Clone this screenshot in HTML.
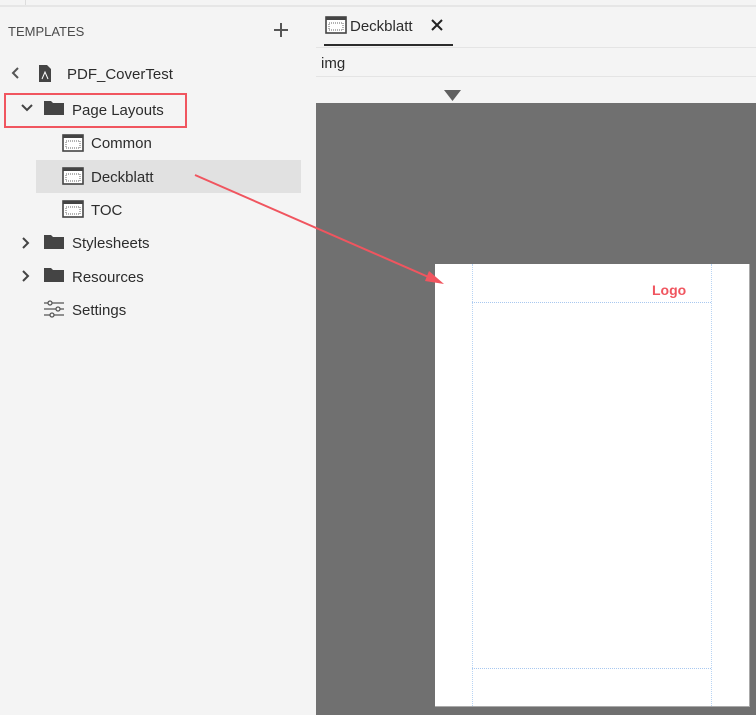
<!DOCTYPE html>
<html><head><style>
*{margin:0;padding:0;box-sizing:border-box}
body{width:756px;height:715px;background:#f4f4f4;font-family:"Liberation Sans",sans-serif;color:#2c2c2c;position:relative;overflow:hidden}
.a{position:absolute}
.t{position:absolute;font-size:15px;white-space:nowrap}
</style></head><body>
<div class="a" style="left:0;top:5px;width:756px;height:2px;background:#e6e6e6"></div>
<div class="a" style="left:25px;top:0;width:1px;height:5px;background:#ddd"></div>
<div class="t" style="left:8px;top:24px;font-size:13px;color:#4b4b4b">TEMPLATES</div>
<svg class="a" style="left:273px;top:22px" width="16" height="16"><path d="M8 1V15M1 8H15" stroke="#555" stroke-width="2"/></svg>
<svg class="a" style="left:10px;top:66px" width="12" height="14"><path d="M8 2L3 7L8 12" stroke="#555" stroke-width="2" fill="none"/></svg>
<svg class="a" style="left:38px;top:64px" width="14" height="19"><path d="M1 1H9L13 5V18H1Z" fill="#444"/><path d="M4 15L7 8L10 15" stroke="#fff" stroke-width="1" fill="none"/></svg>
<div class="t" style="left:67px;top:66px">PDF_CoverTest</div>
<div class="a" style="left:4px;top:93px;width:183px;height:35px;border:2px solid #f0555f"></div>
<svg class="a" style="left:20px;top:103px" width="14" height="10"><path d="M2 2L7 7L12 2" stroke="#444" stroke-width="2" fill="none"/></svg>
<svg class="a" style="left:43px;top:100px" width="22" height="16"><path d="M1 1H8L10 3H21V15H1Z" fill="#444"/></svg>
<div class="t" style="left:72px;top:102px">Page Layouts</div>
<div class="a" style="left:36px;top:160px;width:265px;height:33px;background:#e1e1e1"></div>
<svg class="a" style="left:62px;top:134px" width="22" height="18"><rect x="1" y="1" width="20" height="16" fill="#fff" stroke="#444" stroke-width="1.6"/><rect x="1" y="1" width="20" height="3" fill="#444"/><rect x="4" y="7" width="14" height="7" fill="none" stroke="#666" stroke-dasharray="1 1"/></svg>
<div class="t" style="left:91px;top:135px">Common</div>
<svg class="a" style="left:62px;top:167px" width="22" height="18"><rect x="1" y="1" width="20" height="16" fill="#fff" stroke="#444" stroke-width="1.6"/><rect x="1" y="1" width="20" height="3" fill="#444"/><rect x="4" y="7" width="14" height="7" fill="none" stroke="#666" stroke-dasharray="1 1"/></svg>
<div class="t" style="left:91px;top:169px">Deckblatt</div>
<svg class="a" style="left:62px;top:200px" width="22" height="18"><rect x="1" y="1" width="20" height="16" fill="#fff" stroke="#444" stroke-width="1.6"/><rect x="1" y="1" width="20" height="3" fill="#444"/><rect x="4" y="7" width="14" height="7" fill="none" stroke="#666" stroke-dasharray="1 1"/></svg>
<div class="t" style="left:91px;top:202px">TOC</div>
<svg class="a" style="left:21px;top:236px" width="10" height="14"><path d="M2 2L7 7L2 12" stroke="#444" stroke-width="2" fill="none"/></svg>
<svg class="a" style="left:43px;top:234px" width="22" height="16"><path d="M1 1H8L10 3H21V15H1Z" fill="#444"/></svg>
<div class="t" style="left:72px;top:235px">Stylesheets</div>
<svg class="a" style="left:21px;top:269px" width="10" height="14"><path d="M2 2L7 7L2 12" stroke="#444" stroke-width="2" fill="none"/></svg>
<svg class="a" style="left:43px;top:267px" width="22" height="16"><path d="M1 1H8L10 3H21V15H1Z" fill="#444"/></svg>
<div class="t" style="left:72px;top:269px">Resources</div>
<svg class="a" style="left:43px;top:300px" width="22" height="18" stroke="#555" stroke-width="1.3" fill="#f4f4f4"><path d="M1 3H21M1 9H21M1 15H21"/><circle cx="7" cy="3" r="2"/><circle cx="15" cy="9" r="2"/><circle cx="9" cy="15" r="2"/></svg>
<div class="t" style="left:72px;top:302px">Settings</div>

<svg class="a" style="left:325px;top:16px" width="22" height="18"><rect x="1" y="1" width="20" height="16" fill="#fff" stroke="#444" stroke-width="1.6"/><rect x="1" y="1" width="20" height="3" fill="#444"/><rect x="4" y="7" width="14" height="7" fill="none" stroke="#666" stroke-dasharray="1 1"/></svg>
<div class="t" style="left:350px;top:18px">Deckblatt</div>
<svg class="a" style="left:431px;top:19px" width="12" height="12"><path d="M1 1L11 11M11 1L1 11" stroke="#222" stroke-width="2"/></svg>
<div class="a" style="left:324px;top:44px;width:129px;height:2px;background:#2c2c2c"></div>
<div class="a" style="left:316px;top:47px;width:440px;height:1px;background:#e4e4e4"></div>
<div class="t" style="left:321px;top:55px">img</div>
<div class="a" style="left:316px;top:76px;width:440px;height:1px;background:#e4e4e4"></div>
<svg class="a" style="left:444px;top:90px" width="18" height="12"><path d="M0 0H17L8.5 11Z" fill="#606060"/></svg>
<div class="a" style="left:316px;top:103px;width:440px;height:612px;background:#707070"></div>
<div class="a" style="left:435px;top:264px;width:315px;height:443px;background:#fff;border-right:1px solid #aaa;border-bottom:1px solid #aaa"></div>
<div class="a" style="left:472px;top:264px;width:0;height:442px;border-left:1px dotted #b8d4f4"></div>
<div class="a" style="left:711px;top:264px;width:0;height:442px;border-left:1px dotted #b8d4f4"></div>
<div class="a" style="left:472px;top:302px;width:239px;height:0;border-top:1px dotted #a8c8f0"></div>
<div class="a" style="left:472px;top:668px;width:239px;height:0;border-top:1px dotted #a8c8f0"></div>
<div class="t" style="left:652px;top:282px;font-size:14px;font-weight:bold;color:#f0555f">Logo</div>
<svg class="a" style="left:0;top:0" width="756" height="715"><line x1="195" y1="175" x2="433" y2="279" stroke="#f0555f" stroke-width="2"/><path d="M444 284L429 271L425 281Z" fill="#f0555f"/></svg>
</body></html>
